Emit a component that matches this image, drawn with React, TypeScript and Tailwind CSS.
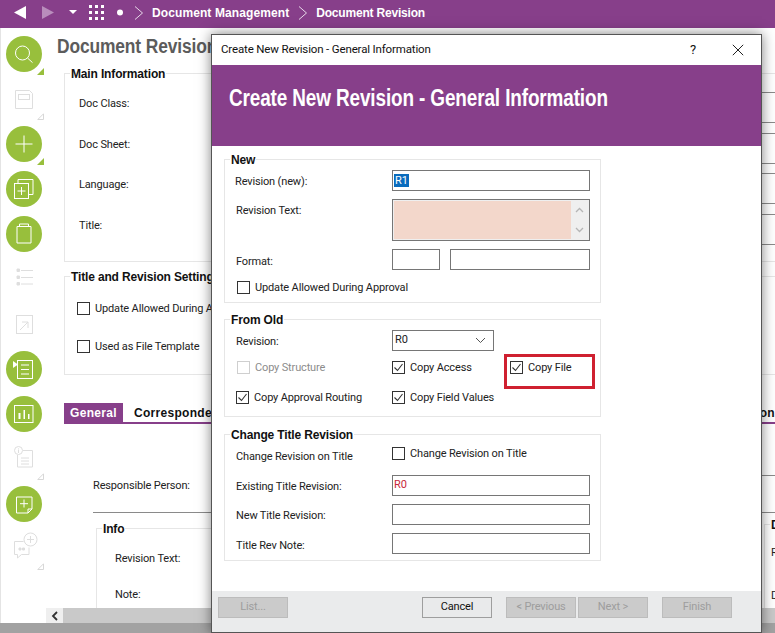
import type { ReactNode } from 'react'

const green = 'flex h-[36px] w-[36px] items-center justify-center rounded-full bg-[#98bf3c]'

function Corner({ solid }: { solid?: boolean }) {
  return (
    <svg className="absolute left-[31px] top-[32px]" width="7" height="7" viewBox="0 0 7 7">
      {solid ? (
        <path d="M0 7 7 0v7z" fill="#98bf3c" />
      ) : (
        <path d="M.8 6.5 6.5.8v5.7z" fill="none" stroke="#d8d8d8" />
      )}
    </svg>
  )
}

function Glyph({ stroke = '#fff', children }: { stroke?: string; children: ReactNode }) {
  return (
    <svg width="36" height="36" viewBox="0 0 36 36" fill="none" stroke={stroke} strokeWidth="1">
      {children}
    </svg>
  )
}

function Sidebar() {
  const gray = '#dedede'
  return (
    <div className="flex w-[46px] shrink-0 flex-col gap-[9px] border-l border-[#e4e4e4] pl-[5px] pt-[8px]">
      <div className="relative h-[36px]">
        <div className={green}>
          <Glyph>
            <circle cx="16.5" cy="17" r="7" />
            <path d="m21.5 22 5 4.600" />
          </Glyph>
        </div>
        <Corner solid />
      </div>
      <div className="relative h-[36px]">
        <Glyph stroke={gray}>
          <path d="M9.500 9.500h14l3 3v15h-17z" />
          <rect x="12.500" y="13.500" width="11" height="5" />
        </Glyph>
        <Corner />
      </div>
      <div className="relative h-[36px]">
        <div className={green}>
          <Glyph>
            <path d="M18 9.500v17M9.500 18h17" />
          </Glyph>
        </div>
        <Corner solid />
      </div>
      <div className={green}>
        <Glyph>
          <rect x="8.500" y="12.500" width="14" height="15" />
          <path d="M12 12.500v-4h15v15h-4.500M15.500 16v8M11.500 20h8" />
        </Glyph>
      </div>
      <div className={green}>
        <Glyph>
          <path d="M11 10.500h14v16.500H11zM13.500 10.500V8h9v2.500" />
        </Glyph>
      </div>
      <div className="h-[36px]">
        <Glyph stroke={gray}>
          <path d="M15 9.500h12M15 16.500h12M15 23h12" />
          <path d="M11 8h2.500v2.500H11zM11 15h2.500v2.500H11zM11 21.500h2.500V24H11z" fill={gray} />
        </Glyph>
      </div>
      <div className="h-[36px]">
        <Glyph stroke={gray}>
          <rect x="10.500" y="9.500" width="16" height="18" />
          <path d="M14 24l8-8M16 16h6v6" />
        </Glyph>
      </div>
      <div className={green}>
        <Glyph>
          <rect x="11.500" y="9.500" width="15" height="18" />
          <path d="M15 14h8M15 18.500h8M15 23h8" />
          <path d="M7 10l5 3.500L7 17z" fill="#fff" stroke="none" />
        </Glyph>
      </div>
      <div className={green}>
        <Glyph>
          <rect x="8.500" y="9.500" width="18.500" height="17" />
          <path d="M12.500 17v6h2v-6zM17.500 14v9h1.500v-9zM22 18v5h1.500v-5z" fill="#fff" stroke="none" />
        </Glyph>
      </div>
      <div className="relative h-[36px]">
        <Glyph stroke={gray}>
          <circle cx="12.500" cy="9.500" r="4" />
          <path d="M12.500 8.500v3.500M12.500 7v.6" />
          <path d="M17 9.500h9.500V26H11.500V14" />
          <path d="M15 17h8M15 20h8M15 23h8" />
        </Glyph>
        <Corner />
      </div>
      <div className={green}>
        <Glyph>
          <path d="M10.500 11h15.500v12l-4 4H10.500z" />
          <path d="M22 27v-4h4M18 13.500v8M14 17.700h8" />
        </Glyph>
      </div>
      <div className="relative h-[36px]">
        <Glyph stroke={gray}>
          <circle cx="24.500" cy="8.500" r="6.500" />
          <path d="M24.500 5v7M21 8.500h7" />
          <path d="M17.500 10.500H8.500v13h3v3.500l4-3.500h7.500v-7" />
          <path d="M13 17h2v2h-2zM16.500 17h2v2h-2z" fill={gray} />
        </Glyph>
        <Corner />
      </div>
    </div>
  )
}

function TopBar() {
  return (
    <div className="flex h-[28px] shrink-0 items-center bg-[#873f8a] pb-[2px] text-white">
      <svg className="ml-[14px]" width="112" height="26" viewBox="0 0 112 26" fill="#fff">
        <path d="M0 12.500 12 6v13z" />
        <path d="M28 6l12 6.500L28 19z" fill="#b98dbc" />
        <path d="M55 10h8l-4 4z" />
        <path d="M75 5h3v3h-3zM81 5h3v3h-3zM87 5h3v3h-3zM75 11h3v3h-3zM81 11h3v3h-3zM87 11h3v3h-3zM75 17h3v3h-3zM81 17h3v3h-3zM87 17h3v3h-3z" />
        <circle cx="106" cy="12.500" r="3" />
      </svg>
      <svg className="ml-[8px]" width="10" height="14" viewBox="0 0 10 14" fill="none" stroke="#e7d8e8">
        <path d="M1 .5 8.500 7 1 13.500" />
      </svg>
      <span className="ml-[8px] font-['Liberation_Sans',sans-serif] text-[12px] font-bold tracking-[.1px]">Document Management</span>
      <svg className="ml-[9px]" width="10" height="14" viewBox="0 0 10 14" fill="none" stroke="#e7d8e8">
        <path d="M1 .5 8.500 7 1 13.500" />
      </svg>
      <span className="ml-[8px] font-['Liberation_Sans',sans-serif] text-[12px] font-bold tracking-[-.2px]">Document Revision</span>
    </div>
  )
}

function Box({ title, className, children }: { title: string; className?: string; children: ReactNode }) {
  return (
    <fieldset className={`border border-[#e6e6e6] ${className ?? ''}`}>
      <legend className="ml-[5px] h-[14px] px-[1px] pt-[1px] font-['Liberation_Sans',sans-serif] text-[12px] font-bold leading-[14px] text-[#111]">{title}</legend>
      {children}
    </fieldset>
  )
}

function Check({ label, checked, off }: { label: string; checked?: boolean; off?: boolean }) {
  return (
    <div className={`flex h-[14px] items-center gap-[5px] whitespace-nowrap leading-[14px] ${off ? 'text-[#8c8c8c]' : 'text-[#222]'}`}>
      <span className={`flex h-[13px] w-[13px] shrink-0 items-center justify-center border ${off ? 'border-[#cfcfcf]' : 'border-[#333]'}`}>
        {checked && (
          <svg width="11" height="11" viewBox="0 0 11 11" fill="none" stroke="#333" strokeWidth="1.100">
            <path d="m1.500 5.500 3 3 5-6.500" />
          </svg>
        )}
      </span>
      <span className="pt-[2px]">{label}</span>
    </div>
  )
}

function Field({ className, children }: { className?: string; children?: ReactNode }) {
  return <div className={`flex h-[21px] items-center border border-[#767676] pl-[1px] ${className ?? ''}`}>{children}</div>
}

function Background() {
  const bgInput = 'ml-[230px] h-[31px] w-[600px] border border-[#8a8a8a]'
  return (
    <div className="relative flex min-w-0 flex-1 flex-col">
      <div className="min-h-0 flex-1 overflow-hidden pl-[11px] pt-[8px]">
        <div className="h-[20px] origin-left scale-x-[.87] whitespace-nowrap font-['Liberation_Sans',sans-serif] text-[20px] font-bold leading-[20px] text-[#5c5c5c]">Document Revision</div>
        <div className="ml-[7px] mt-[10px] w-[800px]">
          <Box title="Main Information">
            <div className="flex flex-col gap-[9.5px] pb-[16.5px] pt-[12px]">
              {['Doc Class:', 'Doc Sheet:', 'Language:', 'Title:'].map((l) => (
                <div key={l} className="flex">
                  <span className="w-[14px]" />
                  <span className="w-[100px] pt-[5px] leading-[14px]">{l}</span>
                  <div className={bgInput} />
                </div>
              ))}
            </div>
          </Box>
          <Box title="Title and Revision Settings" className="mt-[7px]">
            <div className="flex flex-col gap-[24px] pb-[21px] pl-[12px] pt-[18px]">
              <Check label="Update Allowed During Approval" />
              <Check label="Used as File Template" />
            </div>
          </Box>
          <div className="mt-[28px] flex h-[21px] w-[711px] justify-between border-b-2 border-[#873f8a] font-['Liberation_Sans',sans-serif] text-[12px] font-bold">
            <div className="flex">
              <span className="flex w-[59px] items-center justify-center bg-[#873f8a] tracking-[.3px] text-white">General</span>
              <span className="ml-[11px] flex items-center tracking-[.3px] text-[#111]">Correspondence</span>
            </div>
            <span className="flex items-center tracking-[.3px] text-[#111]">Revision</span>
          </div>
          <div className="ml-[29px] mt-[51px] flex h-[38px] border-y border-[#8a8a8a]">
            <span className="-mt-px w-[200px] bg-white pt-[4px] leading-[14px]">Responsible Person:</span>
          </div>
          <div className="ml-[32px] mt-[4px] flex items-start gap-[18px]">
            <Box title="Info" className="mt-[4px] h-[120px] w-[650px] shrink-0">
              <div className="flex flex-col gap-[22px] pl-[18px] pt-[17px]">
                <span className="leading-[14px]">Revision Text:</span>
                <span className="leading-[14px]">Note:</span>
              </div>
            </Box>
            <Box title="Distribution" className="h-[120px] w-[300px] shrink-0">
              <div className="flex flex-col gap-[29px] pl-[6px] pt-[15px]">
                <span className="leading-[14px]">Reviewer:</span>
                <span className="leading-[14px]">Date:</span>
              </div>
            </Box>
          </div>
        </div>
      </div>
      <div className="flex h-[15px] shrink-0 bg-[#c9c9c9]">
        <div className="flex w-[17px] items-center justify-center bg-[#efefef]">
          <svg width="8" height="10" viewBox="0 0 8 10" fill="none" stroke="#333" strokeWidth="1.800">
            <path d="M6 1 2 5l4 4" />
          </svg>
        </div>
      </div>
    </div>
  )
}

function FooterButton({ label, left, on }: { label: string; left: string; on?: boolean }) {
  return (
    <div
      className={`${left} flex h-[21px] w-[70px] shrink-0 items-center justify-center border ${
        on ? 'border-[#9e9e9e] bg-[#e9eaeb] text-[#111]' : 'border-[#bcbcbc] bg-[#cbcbcb] text-[#9d9d9d]'
      }`}
    >
      {label}
    </div>
  )
}

function Dialog() {
  return (
    <div className="absolute left-[211px] top-[34px] flex h-[599px] w-[551px] flex-col border border-[#555] bg-white text-[#222] shadow-[0_0_12px_rgba(0,0,0,0.5)]">
      <div className="flex h-[30px] shrink-0 items-center pl-[9px] text-[11.5px]">
        <span className="text-[#111]">Create New Revision - General Information</span>
        <span className="ml-auto text-[13px] text-[#111]">?</span>
        <svg className="ml-[36px] mr-[17px]" width="12" height="12" viewBox="0 0 12 12" fill="none" stroke="#222">
          <path d="m.8.8 10.400 10.400M11.200.8.800 11.200" />
        </svg>
      </div>
      <div className="h-[81px] shrink-0 bg-[#873f8a] pl-[17px] pt-[21px]">
        <div className="origin-left scale-x-[.823] whitespace-nowrap font-['Liberation_Sans',sans-serif] text-[23px] font-bold leading-[24px] text-white">
          Create New Revision - General Information
        </div>
      </div>
      <div className="min-h-0 flex-1 pl-[12px] pt-[6px]">
        <Box title="New" className="w-[377px]">
          <div className="pb-[8px] pl-[10px] pr-[10px] pt-[4px]">
            <div className="grid grid-cols-[157px_1fr] items-center gap-y-[8px]">
              <span className="pt-[2px] leading-[14px]">Revision (new):</span>
              <Field>
                <span className="bg-[#0a6cbd] px-[1px] leading-[13px] text-white">R1</span>
              </Field>
              <span className="self-start pl-px pt-[5px] leading-[14px]">Revision Text:</span>
              <div className="flex h-[42px] border border-[#767676] bg-[#efefef] p-px">
                <div className="flex-1 bg-[#f3d7cb]" />
                <div className="flex w-[17px] flex-col items-center justify-between py-[6px]">
                  <svg width="9" height="6" viewBox="0 0 9 6" fill="none" stroke="#b5b5b5" strokeWidth="1.300">
                    <path d="m1 5 3.500-3.500L8 5" />
                  </svg>
                  <svg width="9" height="6" viewBox="0 0 9 6" fill="none" stroke="#b5b5b5" strokeWidth="1.300">
                    <path d="m1 1 3.500 3.500L8 1" />
                  </svg>
                </div>
              </div>
              <span className="pl-px pt-[4px] leading-[14px]">Format:</span>
              <div className="flex gap-[10px]">
                <Field className="w-[48px]" />
                <Field className="flex-1" />
              </div>
            </div>
            <div className="ml-[2px] mt-[10px]">
              <Check label="Update Allowed During Approval" />
            </div>
          </div>
        </Box>
        <Box title="From Old" className="mt-[9px] w-[377px]">
          <div className="pb-[12px] pl-[11px] pr-[10px] pt-[4px]">
            <div className="flex items-center">
              <span className="w-[156px] pt-[2px] leading-[14px]">Revision:</span>
              <Field className="w-[102px] justify-between pl-[2px] pr-[7px]">
                R0
                <svg width="11" height="7" viewBox="0 0 11 7" fill="none" stroke="#555">
                  <path d="m1 1 4.500 4.500L10 1" />
                </svg>
              </Field>
            </div>
            <div className="mt-[9px] grid grid-cols-[156px_118px_1fr] gap-y-[16px]">
              <div className="pl-px">
                <Check label="Copy Structure" off />
              </div>
              <Check label="Copy Access" checked />
              <div className="relative">
                <Check label="Copy File" checked />
                <div className="absolute -top-[6px] left-[-6px] h-[35px] w-[91px] border-[3px] border-[#cf2030]" />
              </div>
              <Check label="Copy Approval Routing" checked />
              <Check label="Copy Field Values" checked />
            </div>
          </div>
        </Box>
        <Box title="Change Title Revision" className="mt-[10px] w-[377px]">
          <div className="pb-[6px] pl-[11px] pr-[10px] pt-[5px]">
            <div className="grid grid-cols-[156px_1fr] items-center gap-y-[8px]">
              <span className="self-start pt-[4px] leading-[14px]">Change Revision on Title</span>
              <div className="h-[21px]">
                <Check label="Change Revision on Title" />
              </div>
              <span className="pt-[2px] leading-[14px]">Existing Title Revision:</span>
              <Field className="text-[#c8283a]">R0</Field>
              <span className="pt-[2px] leading-[14px]">New Title Revision:</span>
              <Field />
              <span className="pt-[4px] leading-[14px]">Title Rev Note:</span>
              <Field />
            </div>
          </div>
        </Box>
      </div>
      <div className="flex h-[41px] shrink-0 items-start bg-[#eaebec] pt-[6px]">
        <FooterButton label="List..." left="ml-[6px]" />
        <FooterButton label="Cancel" left="ml-[134px]" on />
        <FooterButton label="< Previous" left="ml-[14px]" />
        <FooterButton label="Next >" left="ml-[2px]" />
        <FooterButton label="Finish" left="ml-[14px]" />
      </div>
    </div>
  )
}

export default function App() {
  return (
    <div className="relative flex h-[633px] w-[775px] flex-col overflow-hidden bg-white font-['Roboto',sans-serif] text-[11px] tracking-[-.15px] text-[#222]">
      <TopBar />
      <div className="flex min-h-0 flex-1">
        <Sidebar />
        <Background />
      </div>
      <div className="h-[10px] shrink-0 bg-[#a2a2a2]" />
      <Dialog />
    </div>
  )
}
